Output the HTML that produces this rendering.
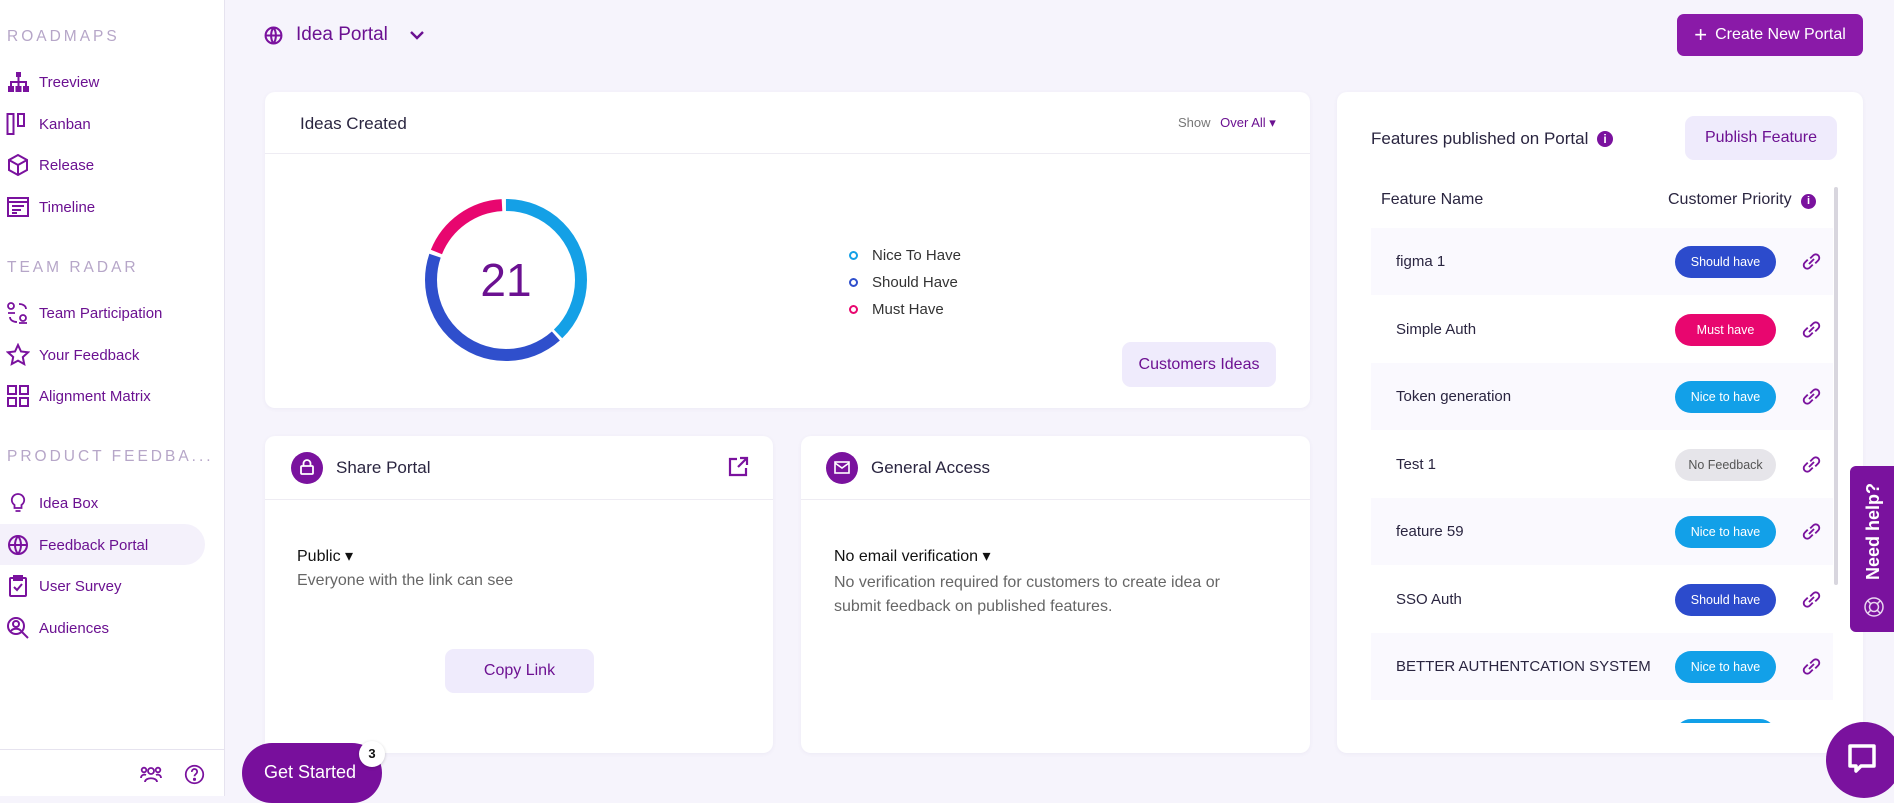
<!DOCTYPE html>
<html><head><meta charset="utf-8"><style>
*{box-sizing:border-box;margin:0;padding:0}
body{width:1894px;height:796px;overflow:hidden;background:#f6f4fc;font-family:"Liberation Sans",sans-serif;color:#2a2540;position:relative}
.abs{position:absolute}
.side{left:0;top:0;width:225px;height:796px;background:#fff;border-right:1px solid #e6e3ef}
.sec{position:absolute;left:7px;font-size:15.5px;letter-spacing:3px;color:#b6a6c8}
.item{position:absolute;left:6px;font-size:15px;color:#6b1191;display:flex;align-items:center;gap:9px;height:24px}
.item svg{width:24px;height:24px}
.card{position:absolute;background:#fff;border-radius:10px;box-shadow:0 1px 4px rgba(80,60,140,.06)}
.btnl{position:absolute;background:#efebfc;color:#6d1192;border-radius:9px;font-size:16px;display:flex;align-items:center;justify-content:center}
.row{position:absolute;left:1371px;width:462px;height:67px;font-size:15px;display:flex;align-items:center;padding-left:25px}
.row.s{background:#faf9fe}
.pill{position:absolute;left:304px;width:101px;height:32px;border-radius:16px;color:#fff;font-size:12.5px;display:flex;align-items:center;justify-content:center;top:18px}
.lk{position:absolute;left:428px;top:21px}
</style></head><body>
<div class="abs side">
 <div class="sec" style="top:28px">ROADMAPS</div>
 <div class="item" style="top:70px"><svg viewBox="0 0 24 24" fill="#7a129e"><rect x="10" y="2" width="5" height="5"/><rect x="11.5" y="7" width="2" height="4"/><rect x="4" y="11" width="17" height="2"/><rect x="4" y="11" width="2" height="5"/><rect x="11.5" y="11" width="2" height="5"/><rect x="19" y="11" width="2" height="5"/><rect x="2" y="16" width="6" height="6"/><rect x="9.5" y="16" width="6" height="6"/><rect x="17" y="16" width="6" height="6"/></svg>Treeview</div>
 <div class="item" style="top:112px"><svg viewBox="0 0 24 24" fill="none" stroke="#7a129e" stroke-width="2"><rect x="1.5" y="2" width="6" height="20"/><rect x="12" y="2" width="6" height="12"/></svg>Kanban</div>
 <div class="item" style="top:153px"><svg viewBox="0 0 24 24" fill="none" stroke="#7a129e" stroke-width="2"><path d="M12 2l9 5v10l-9 5-9-5V7z M3 7l9 5 9-5 M12 12v10"/></svg>Release</div>
 <div class="item" style="top:195px"><svg viewBox="0 0 24 24" fill="none" stroke="#7a129e" stroke-width="2"><rect x="2" y="3" width="20" height="18"/><path d="M2 7h20M6 11h12M6 15h9M6 18h5"/></svg>Timeline</div>
 <div class="sec" style="top:259px">TEAM RADAR</div>
 <div class="item" style="top:301px"><svg viewBox="0 0 24 24" fill="none" stroke="#7a129e" stroke-width="1.8"><circle cx="5" cy="5" r="3"/><circle cx="17" cy="17" r="3"/><path d="M2 12h7M13 22h8M4 16c0 3 3 5 7 5M20 8c0-3-3-5-7-5"/></svg>Team Participation</div>
 <div class="item" style="top:343px"><svg viewBox="0 0 24 24" fill="none" stroke="#7a129e" stroke-width="2"><path d="M12 2l3 6.5 7 .8-5.2 4.8 1.4 7L12 17.6 5.8 21l1.4-7L2 9.3l7-.8z"/></svg>Your Feedback</div>
 <div class="item" style="top:384px"><svg viewBox="0 0 24 24" fill="none" stroke="#7a129e" stroke-width="2"><rect x="2" y="2" width="8" height="8"/><rect x="14" y="2" width="8" height="8"/><rect x="2" y="14" width="8" height="8"/><rect x="14" y="14" width="8" height="8"/></svg>Alignment Matrix</div>
 <div class="sec" style="top:448px">PRODUCT FEEDBA...</div>
 <div class="item" style="top:491px"><svg viewBox="0 0 24 24" fill="none" stroke="#7a129e" stroke-width="1.8"><path d="M12 3a6 6 0 00-3.5 11v3h7v-3A6 6 0 0012 3zM9.5 20h5"/></svg>Idea Box</div>
 <div class="abs" style="left:0;top:524px;width:205px;height:41px;background:#f4f1fb;border-radius:0 21px 21px 0"></div>
 <div class="item" style="top:533px"><svg viewBox="0 0 24 24" fill="none" stroke="#7a129e" stroke-width="2"><circle cx="12" cy="12" r="9"/><path d="M3 12h18M12 3c-4 5-4 13 0 18M12 3c4 5 4 13 0 18"/></svg>Feedback Portal</div>
 <div class="item" style="top:574px"><svg viewBox="0 0 24 24" fill="none" stroke="#7a129e" stroke-width="2"><rect x="4" y="4" width="16" height="18" rx="1"/><rect x="8" y="2" width="8" height="4"/><path d="M8 13l3 3 5-6"/></svg>User Survey</div>
 <div class="item" style="top:616px"><svg viewBox="0 0 24 24" fill="none" stroke="#7a129e" stroke-width="2"><circle cx="10" cy="10" r="8"/><circle cx="10" cy="8" r="3"/><path d="M5 15c2-3 8-3 10 0M16 16l6 6"/></svg>Audiences</div>
 <div class="abs" style="left:0;top:749px;width:225px;border-top:1px solid #e6e3ef"></div>
 <svg class="abs" style="left:140px;top:764px" width="22" height="20" viewBox="0 0 22 20" fill="none" stroke="#7a129e" stroke-width="1.8"><circle cx="11" cy="7" r="3"/><circle cx="4" cy="6" r="2.3"/><circle cx="18" cy="6" r="2.3"/><path d="M5 18c0-5 12-5 12 0M1 14c0-3 3-4 5-3M21 14c0-3-3-4-5-3"/></svg>
 <svg class="abs" style="left:184px;top:764px" width="21" height="21" viewBox="0 0 24 24" fill="none" stroke="#7a129e" stroke-width="2"><circle cx="12" cy="12" r="10"/><path d="M9 9a3 3 0 115 2c-1 1-2 1.5-2 3"/><circle cx="12" cy="17.5" r=".8" fill="#7a129e"/></svg>
</div>

<svg class="abs" style="left:264px;top:26px" width="19" height="19" viewBox="0 0 24 24" fill="none" stroke="#7a129e" stroke-width="2.6"><circle cx="12" cy="12" r="10"/><path d="M2 12h20M12 2c-4 5-4 15 0 20M12 2c4 5 4 15 0 20"/></svg>
<div class="abs" style="left:296px;top:24px;font-size:19px;color:#6b1191">Idea Portal</div>
<svg class="abs" style="left:409px;top:30px" width="16" height="10" viewBox="0 0 16 10" fill="none" stroke="#6b1191" stroke-width="2.4"><path d="M2 2l6 6 6-6"/></svg>
<div class="abs" style="left:1677px;top:14px;width:186px;height:42px;background:#8a1aa8;border-radius:7px;color:#fff;font-size:16px;display:flex;align-items:center;justify-content:center;gap:8px"><span style="font-size:22px;font-weight:300">+</span>Create New Portal</div>

<div class="card" style="left:265px;top:92px;width:1045px;height:316px">
 <div class="abs" style="left:35px;top:22px;font-size:17px">Ideas Created</div>
 <div class="abs" style="left:913px;top:23px;font-size:13px;color:#777">Show <span style="color:#6b1191;margin-left:6px">Over All ▾</span></div>
 <div class="abs" style="left:0;top:61px;width:100%;border-top:1px solid #eeecf3"></div>
 <svg class="abs" style="left:160px;top:107px" width="162" height="162" viewBox="0 0 162 162">
  <g transform="rotate(-90 81 81)" fill="none" stroke-width="12">
   <circle cx="81" cy="81" r="75" stroke="#14a0e6" stroke-dasharray="178 293"/>
   <circle cx="81" cy="81" r="75" stroke="#2f4fcc" stroke-dasharray="0 181 197 93"/>
   <circle cx="81" cy="81" r="75" stroke="#e8066f" stroke-dasharray="0 382 85 4"/>
  </g>
  <text x="81" y="97" text-anchor="middle" font-size="46" fill="#6b1191" font-family="Liberation Sans">21</text>
 </svg>
 <div class="abs" style="left:584px;top:150px;font-size:15px;line-height:27px;color:#333">
  <div><span style="display:inline-block;width:9px;height:9px;border:2px solid #14a0e6;border-radius:50%;margin-right:14px"></span>Nice To Have</div>
  <div><span style="display:inline-block;width:9px;height:9px;border:2px solid #2f4fcc;border-radius:50%;margin-right:14px"></span>Should Have</div>
  <div><span style="display:inline-block;width:9px;height:9px;border:2px solid #e8066f;border-radius:50%;margin-right:14px"></span>Must Have</div>
 </div>
 <div class="btnl" style="left:857px;top:250px;width:154px;height:45px">Customers Ideas</div>
</div>

<div class="card" style="left:265px;top:436px;width:508px;height:317px">
 <div class="abs" style="left:26px;top:16px;width:32px;height:32px;border-radius:50%;background:#7a129e"></div>
 <svg class="abs" style="left:33px;top:22px" width="18" height="18" viewBox="0 0 18 18" fill="none" stroke="#fff" stroke-width="1.8"><rect x="3" y="8" width="12" height="8" rx="1"/><path d="M5.5 8V5.5a3.5 3.5 0 017 0V8"/></svg>
 <div class="abs" style="left:71px;top:22px;font-size:17px">Share Portal</div>
 <svg class="abs" style="left:462px;top:20px" width="22" height="22" viewBox="0 0 22 22" fill="none" stroke="#7a129e" stroke-width="2.2"><path d="M10 3H3v16h16v-7M13 2h7v7M20 2l-9 9"/></svg>
 <div class="abs" style="left:0;top:63px;width:100%;border-top:1px solid #eeecf3"></div>
 <div class="abs" style="left:32px;top:110px;font-size:16px;color:#111">Public ▾</div>
 <div class="abs" style="left:32px;top:136px;font-size:16px;color:#666">Everyone with the link can see</div>
 <div class="btnl" style="left:180px;top:213px;width:149px;height:44px">Copy Link</div>
</div>

<div class="card" style="left:801px;top:436px;width:509px;height:317px">
 <div class="abs" style="left:25px;top:16px;width:32px;height:32px;border-radius:50%;background:#7a129e"></div>
 <svg class="abs" style="left:32px;top:24px" width="18" height="16" viewBox="0 0 18 16" fill="none" stroke="#fff" stroke-width="1.6"><rect x="2" y="2" width="14" height="11"/><path d="M2 3l7 5 7-5"/></svg>
 <div class="abs" style="left:70px;top:22px;font-size:17px">General Access</div>
 <div class="abs" style="left:0;top:63px;width:100%;border-top:1px solid #eeecf3"></div>
 <div class="abs" style="left:33px;top:110px;font-size:16px;color:#111">No email verification ▾</div>
 <div class="abs" style="left:33px;top:135px;font-size:16px;color:#666;line-height:24px;width:430px">No verification required for customers to create idea or submit feedback on published features.</div>
</div>

<div class="card" style="left:1337px;top:92px;width:526px;height:661px;overflow:hidden">
 <div class="abs" style="left:34px;top:37px;font-size:17px">Features published on Portal <span style="display:inline-block;width:16px;height:16px;border-radius:50%;background:#7a129e;color:#fff;font-size:12px;font-weight:bold;text-align:center;line-height:16px;vertical-align:1px;margin-left:4px">i</span></div>
 <div class="btnl" style="left:348px;top:24px;width:152px;height:44px">Publish Feature</div>
 <div class="abs" style="left:44px;top:99px;font-size:16px">Feature Name</div>
 <div class="abs" style="left:331px;top:99px;font-size:16px">Customer Priority <span style="display:inline-block;width:15px;height:15px;border-radius:50%;background:#7a129e;color:#fff;font-size:11px;font-weight:bold;text-align:center;line-height:15px;margin-left:5px">i</span></div>
 <div class="abs" style="left:497px;top:95px;width:4px;height:398px;background:#d8d6de;border-radius:2px"></div>
</div>
<svg width="0" height="0" style="position:absolute"><defs><symbol id="ln" viewBox="0 0 20 20"><g fill="none" stroke="#7a129e" stroke-width="1.5"><path d="M8 12l4-4M7 8.5l-2.4 2.4a2.8 2.8 0 004 4L11 12.5M13 11.5l2.4-2.4a2.8 2.8 0 00-4-4L9 7.5"/></g></symbol></defs></svg>
<div class="row s" style="top:228px">figma 1<div class="pill" style="background:#2c4bcc">Should have</div><svg class="lk" width="25" height="25"><use href="#ln"/></svg></div>
<div class="row" style="top:296px">Simple Auth<div class="pill" style="background:#e8066f">Must have</div><svg class="lk" width="25" height="25"><use href="#ln"/></svg></div>
<div class="row s" style="top:363px">Token generation<div class="pill" style="background:#12a0e8">Nice to have</div><svg class="lk" width="25" height="25"><use href="#ln"/></svg></div>
<div class="row" style="top:431px">Test 1<div class="pill" style="background:#e6e5ea;color:#555">No Feedback</div><svg class="lk" width="25" height="25"><use href="#ln"/></svg></div>
<div class="row s" style="top:498px">feature 59<div class="pill" style="background:#12a0e8">Nice to have</div><svg class="lk" width="25" height="25"><use href="#ln"/></svg></div>
<div class="row" style="top:566px">SSO Auth<div class="pill" style="background:#2c4bcc">Should have</div><svg class="lk" width="25" height="25"><use href="#ln"/></svg></div>
<div class="row s" style="top:633px">BETTER AUTHENTCATION SYSTEM<div class="pill" style="background:#12a0e8">Nice to have</div><svg class="lk" width="25" height="25"><use href="#ln"/></svg></div>
<div class="abs" style="left:1675px;top:719px;width:101px;height:34px;border-radius:16px 16px 0 0;background:#12a0e8;clip-path:inset(0 0 30px 0)"></div>

<div class="abs" style="left:1850px;top:466px;width:46px;height:166px;background:#7a129e;border-radius:6px 0 0 6px"></div>
<div class="abs" style="left:1850px;top:466px;width:46px;height:130px;display:flex;align-items:center;justify-content:center"><div style="transform:rotate(-90deg);color:#fff;font-weight:bold;font-size:18px;white-space:nowrap">Need help?</div></div>
<svg class="abs" style="left:1863px;top:596px" width="22" height="22" viewBox="0 0 22 22" fill="none" stroke="#e9d6f0" stroke-width="1.5"><circle cx="11" cy="11" r="9"/><circle cx="11" cy="11" r="4.5"/><path d="M4.5 4.5l3.3 3.3M17.5 4.5l-3.3 3.3M4.5 17.5l3.3-3.3M17.5 17.5l-3.3-3.3"/></svg>
<div class="abs" style="left:1826px;top:722px;width:76px;height:76px;border-radius:50%;background:#7a129e"></div>
<svg class="abs" style="left:1844px;top:740px" width="36" height="36" viewBox="0 0 36 36" fill="none" stroke="#fff" stroke-width="3.5" stroke-linejoin="round"><path d="M6 6h24v20H17l-5 5v-5H6z"/></svg>

<div class="abs" style="left:242px;top:743px;width:140px;height:60px;border-radius:30px;background:#780f9c;color:#fff;font-size:18px;padding:19px 0 0 22px">Get Started</div>
<div class="abs" style="left:359px;top:741px;width:26px;height:26px;border-radius:50%;background:#fff;color:#111;font-size:13px;font-weight:bold;text-align:center;line-height:26px;box-shadow:0 1px 3px rgba(0,0,0,.2)">3</div>
</body></html>
